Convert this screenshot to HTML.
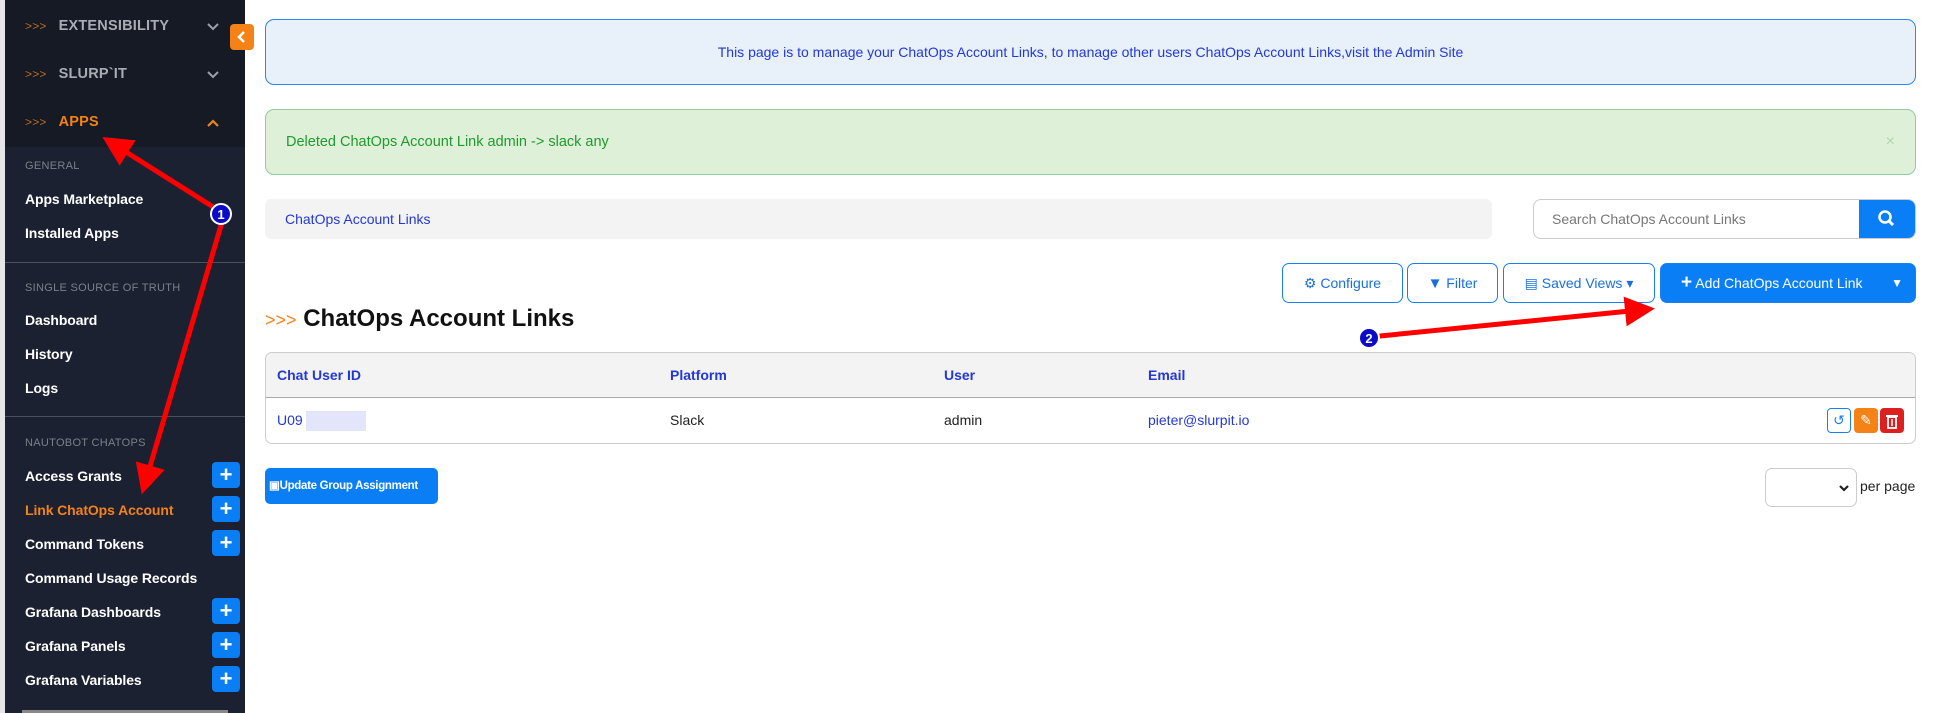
<!DOCTYPE html>
<html><head><meta charset="utf-8">
<style>
*{box-sizing:border-box;margin:0;padding:0}
body{width:1938px;height:713px;overflow:hidden;background:#fff;font-family:"Liberation Sans",sans-serif;position:relative}
.abs{position:absolute}
#sb{left:0;top:0;width:245px;height:713px;background:#1b2130}
#sbtop{left:5px;top:0;width:240px;height:147px;background:#151a24}
#edge{left:0;top:0;width:5px;height:713px;background:#e6e6e6}
.sec{position:absolute;left:25px;font-size:14.5px;font-weight:bold;color:#a9adb3;letter-spacing:.2px}
.sec .g{color:#b86a1c;font-weight:normal;font-size:12px;margin-right:12px}
.chev{position:absolute;left:206px}
.hdr{position:absolute;left:25px;font-size:11px;color:#7b818a;letter-spacing:.3px}
.it{position:absolute;left:25px;font-size:14px;font-weight:bold;color:#fff;line-height:18px;letter-spacing:-.1px}
.pl{position:absolute;left:212px;width:28px;height:26px;background:#0a7ff5;border-radius:4px;color:#fff;font-weight:bold;font-size:22px;line-height:26px;text-align:center}
.dv{position:absolute;left:5px;width:240px;height:1px;background:#4a505a}
.btn{position:absolute;top:263px;height:40px;border:1px solid #1a7ff0;border-radius:7px;color:#1a6fe0;font-size:14px;line-height:38px;text-align:center;background:#fff;white-space:nowrap}
</style></head><body>
<div id="sb" class="abs"></div>
<div id="sbtop" class="abs"></div>
<div id="edge" class="abs"></div>
<div class="sec" style="top:18px"><span class="g">&gt;&gt;&gt;</span>EXTENSIBILITY</div><svg class="chev" style="top:22px" width="14" height="10"><path d="M2 2 L7 7 L12 2" stroke="#9aa0a8" stroke-width="2" fill="none"/></svg>
<div class="sec" style="top:66px"><span class="g">&gt;&gt;&gt;</span>SLURP`IT</div><svg class="chev" style="top:70px" width="14" height="10"><path d="M2 2 L7 7 L12 2" stroke="#9aa0a8" stroke-width="2" fill="none"/></svg>
<div class="sec" style="top:114px;color:#f58216"><span class="g">&gt;&gt;&gt;</span>APPS</div><svg class="chev" style="top:118px" width="14" height="10"><path d="M2 8 L7 3 L12 8" stroke="#f58216" stroke-width="2.2" fill="none"/></svg>
<div class="hdr" style="top:160px">GENERAL</div>
<div class="it" style="top:190px">Apps Marketplace</div>
<div class="it" style="top:224px">Installed Apps</div>
<div class="dv" style="top:262px"></div>
<div class="hdr" style="top:282px">SINGLE SOURCE OF TRUTH</div>
<div class="it" style="top:311px">Dashboard</div>
<div class="it" style="top:345px">History</div>
<div class="it" style="top:379px">Logs</div>
<div class="dv" style="top:416px"></div>
<div class="hdr" style="top:437px">NAUTOBOT CHATOPS</div>
<div class="it" style="top:467px">Access Grants</div><div class="pl" style="top:462px">+</div>
<div class="it" style="top:501px;color:#f58216">Link ChatOps Account</div><div class="pl" style="top:496px">+</div>
<div class="it" style="top:535px">Command Tokens</div><div class="pl" style="top:530px">+</div>
<div class="it" style="top:569px">Command Usage Records</div>
<div class="it" style="top:603px">Grafana Dashboards</div><div class="pl" style="top:598px">+</div>
<div class="it" style="top:637px">Grafana Panels</div><div class="pl" style="top:632px">+</div>
<div class="it" style="top:671px">Grafana Variables</div><div class="pl" style="top:666px">+</div>
<div class="abs" style="left:22px;top:710px;width:206px;height:3px;background:#888"></div>
<div class="abs" style="left:230px;top:24px;width:24px;height:26px;background:#f58216;border-radius:4px"><svg width="24" height="26"><path d="M14 8 L9 13 L14 18" stroke="#fff" stroke-width="2.5" fill="none"/></svg></div>

<div class="abs" style="left:265px;top:19px;width:1651px;height:66px;background:#e8f0f9;border:1px solid #2b86f0;border-radius:9px;color:#2338d8;font-size:14px;text-align:center;line-height:64px">This page is to manage your ChatOps Account Links, to manage other users ChatOps Account Links,visit the Admin Site</div>
<div class="abs" style="left:265px;top:109px;width:1651px;height:66px;background:#dff0d9;border:1px solid #8fcca0;border-radius:9px;color:#1f9a2c;font-size:14.5px;line-height:64px;padding-left:20px">Deleted ChatOps Account Link admin -&gt; slack any<span style="position:absolute;right:20px;color:#a8d8b0;font-size:16px">×</span></div>
<div class="abs" style="left:265px;top:199px;width:1227px;height:40px;background:#f3f3f3;border-radius:6px;color:#2338d8;font-size:14px;line-height:40px;padding-left:20px">ChatOps Account Links</div>
<div class="abs" style="left:1533px;top:199px;width:383px;height:40px;border:1px solid #ccc;border-radius:8px;color:#777;font-size:14px;line-height:38px;padding-left:18px;overflow:hidden">Search ChatOps Account Links
<div class="abs" style="right:0;top:0;width:56px;height:40px;background:#0a7ff5"><svg width="56" height="38" viewBox="0 0 56 38"><circle cx="26" cy="17" r="5.5" stroke="#fff" stroke-width="2.5" fill="none"/><line x1="30" y1="21" x2="34" y2="25" stroke="#fff" stroke-width="3"/></svg></div></div>

<div class="btn" style="left:1282px;width:121px">&#9881; Configure</div>
<div class="btn" style="left:1407px;width:91px"><b style="font-size:15px">&#9660;</b> Filter</div>
<div class="btn" style="left:1503px;width:152px">&#9636; Saved Views &#9662;</div>
<div class="btn" style="left:1660px;width:256px;background:#0a7ff5;color:#fff;text-align:left;padding-left:20px"><b style="font-size:19px">+</b> Add ChatOps Account Link<span style="position:absolute;right:12px;font-size:12px">&#9660;</span></div>

<div class="abs" style="left:265px;top:305px;font-size:24px;font-weight:bold;color:#111"><span style="color:#f58216;font-weight:normal;font-size:18px">&gt;&gt;&gt;</span> ChatOps Account Links</div>

<div class="abs" style="left:265px;top:352px;width:1651px;height:92px;border:1px solid #ccc;border-radius:7px;overflow:hidden">
<div style="height:45px;background:#f3f3f3;border-bottom:1px solid #aaa;position:relative;font-size:14px;font-weight:bold;color:#2338d8;line-height:44px">
<span class="abs" style="left:11px">Chat User ID</span><span class="abs" style="left:404px">Platform</span><span class="abs" style="left:678px">User</span><span class="abs" style="left:882px">Email</span></div>
<div style="position:relative;font-size:14px;line-height:44px;color:#222">
<span class="abs" style="left:11px;color:#2338d8">U09</span><span class="abs" style="left:40px;top:13px;width:60px;height:20px;background:#e3e6fb"></span><span class="abs" style="left:404px">Slack</span><span class="abs" style="left:678px">admin</span><span class="abs" style="left:882px;color:#2338d8">pieter@slurpit.io</span>
<span class="abs" style="left:1561px;top:10px;width:24px;height:25px;border:1px solid #1a7ff0;border-radius:4px;color:#1a7ff0;font-size:14px;line-height:22px;text-align:center">&#8634;</span>
<span class="abs" style="left:1588px;top:10px;width:24px;height:25px;background:#f58216;border-radius:4px;color:#fff;font-size:14px;line-height:24px;text-align:center">&#9998;</span>
<span class="abs" style="left:1614px;top:10px;width:24px;height:25px;background:#dc2020;border-radius:4px"><svg width="24" height="25"><rect x="8" y="7" width="8" height="11" stroke="#fff" stroke-width="1.8" fill="none"/><line x1="6" y1="6" x2="18" y2="6" stroke="#fff" stroke-width="2"/><line x1="12" y1="9" x2="12" y2="16" stroke="#fff" stroke-width="1.5"/></svg></span>
</div></div>

<div class="abs" style="left:265px;top:468px;width:173px;height:36px;background:#0a7ff5;border-radius:5px;color:#fff;font-size:11.5px;font-weight:bold;line-height:36px;padding-left:4px;white-space:nowrap;letter-spacing:-.3px">&#9635;Update Group Assignment</div>
<div class="abs" style="left:1765px;top:468px;width:92px;height:39px;border:1px solid #ccc;border-radius:7px"><svg class="abs" style="right:6px;top:15px" width="12" height="9"><path d="M2 2 L6 6 L10 2" stroke="#222" stroke-width="2.2" fill="none"/></svg></div>
<div class="abs" style="left:1860px;top:478px;font-size:14px;color:#222">per page</div>

<svg class="abs" style="left:0;top:0" width="1938" height="713">
<defs><marker id="ah" markerWidth="6" markerHeight="6" refX="3" refY="3" orient="auto"><path d="M0,0 L6,3 L0,6 Z" fill="#f00"/></marker></defs>
<g stroke="#f00" stroke-width="5" fill="none" marker-end="url(#ah)">
<line x1="218" y1="210" x2="115" y2="145"/>
<line x1="222" y1="222" x2="146" y2="480"/>
<line x1="1370" y1="337" x2="1640" y2="310"/>
</g>
<circle cx="221" cy="214" r="10" fill="#0a0ac8" stroke="#fff" stroke-width="2"/><text x="221" y="219" fill="#fff" font-size="13" font-weight="bold" text-anchor="middle" font-family="Liberation Sans">1</text>
<circle cx="1369" cy="338" r="10" fill="#0a0ac8" stroke="#fff" stroke-width="2"/><text x="1369" y="343" fill="#fff" font-size="13" font-weight="bold" text-anchor="middle" font-family="Liberation Sans">2</text>
</svg>
</body></html>
